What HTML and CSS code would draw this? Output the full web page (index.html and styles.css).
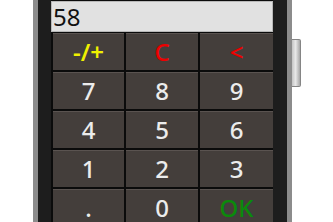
FILE: index.html
```html
<!DOCTYPE html>
<html lang="en">
<head>
    <meta charset="UTF-8">
    <meta name="viewport" content="width=device-width, initial-scale=1.0">
    <title>Calculator</title>
    <link rel="stylesheet" href="styles.css">
</head>
<body>
    <div class="device">
        <div class="phone">
            <div class="screen">
                <div class="display">58</div>
                <div class="keys">
                    <button class="key sign">-/+</button>
                    <button class="key clear">C</button>
                    <button class="key back">&lt;</button>
                    <button class="key">7</button>
                    <button class="key">8</button>
                    <button class="key">9</button>
                    <button class="key">4</button>
                    <button class="key">5</button>
                    <button class="key">6</button>
                    <button class="key">1</button>
                    <button class="key">2</button>
                    <button class="key">3</button>
                    <button class="key">.</button>
                    <button class="key">0</button>
                    <button class="key ok">OK</button>
                </div>
            </div>
        </div>
        <!-- volume key on the side of the handset -->
        <div class="side-key"></div>
    </div>
</body>
</html>
```

FILE: styles.css
```css
* {
  padding: 0;
  margin: 0;
  box-sizing: border-box;
}
html {
  font-family: 'Noto Sans', 'Open Sans', sans-serif;
  background-color: #fff;
  overflow: hidden;
}
body {
  width: 333px;
  height: 222px;
  overflow: hidden;
}
.device {
  display: flex;
  align-items: flex-start;
  padding-left: 33px;
}
.phone {
  width: 259px;
  height: 222px;
  background-color: #1d1d1d;
  border-left: 5px solid #8c8c8c;
  border-right: 5px solid #8c8c8c;
  padding: 0 14px 0 13px;
}
.screen {
  width: 222px;
  height: 222px;
  background-color: #0b0b0b;
  padding-top: 1px;
  overflow: hidden;
}
.display {
  height: 31px;
  background-color: #e1e1e1;
  border: 1px solid #b8b8b8;
  color: #111;
  font-size: 24px;
  line-height: 29px;
  padding-left: 1px;
}
.keys {
  display: grid;
  grid-template-columns: 71px 72px 73px;
  grid-auto-rows: 37px;
  gap: 2px;
  padding: 1px 0 0 2px;
}
.key {
  border: none;
  border-top: 1px solid #5a5350;
  background-color: #443e3b;
  color: #ececec;
  font-family: inherit;
  font-size: 24px;
  font-weight: 500;
  line-height: 36px;
}
.sign {
  color: #f0f000;
  font-weight: 600;
}
.clear,
.back {
  color: #ee0000;
}
.ok {
  color: #0b8a0b;
}
.side-key {
  width: 9px;
  height: 48px;
  margin-top: 39px;
  border: 1px solid #858585;
  border-left: none;
  border-radius: 0 2px 2px 0;
  background: linear-gradient(to right, #c4c4c4, #e8e8e8 45%, #a6a6a6);
}
```
